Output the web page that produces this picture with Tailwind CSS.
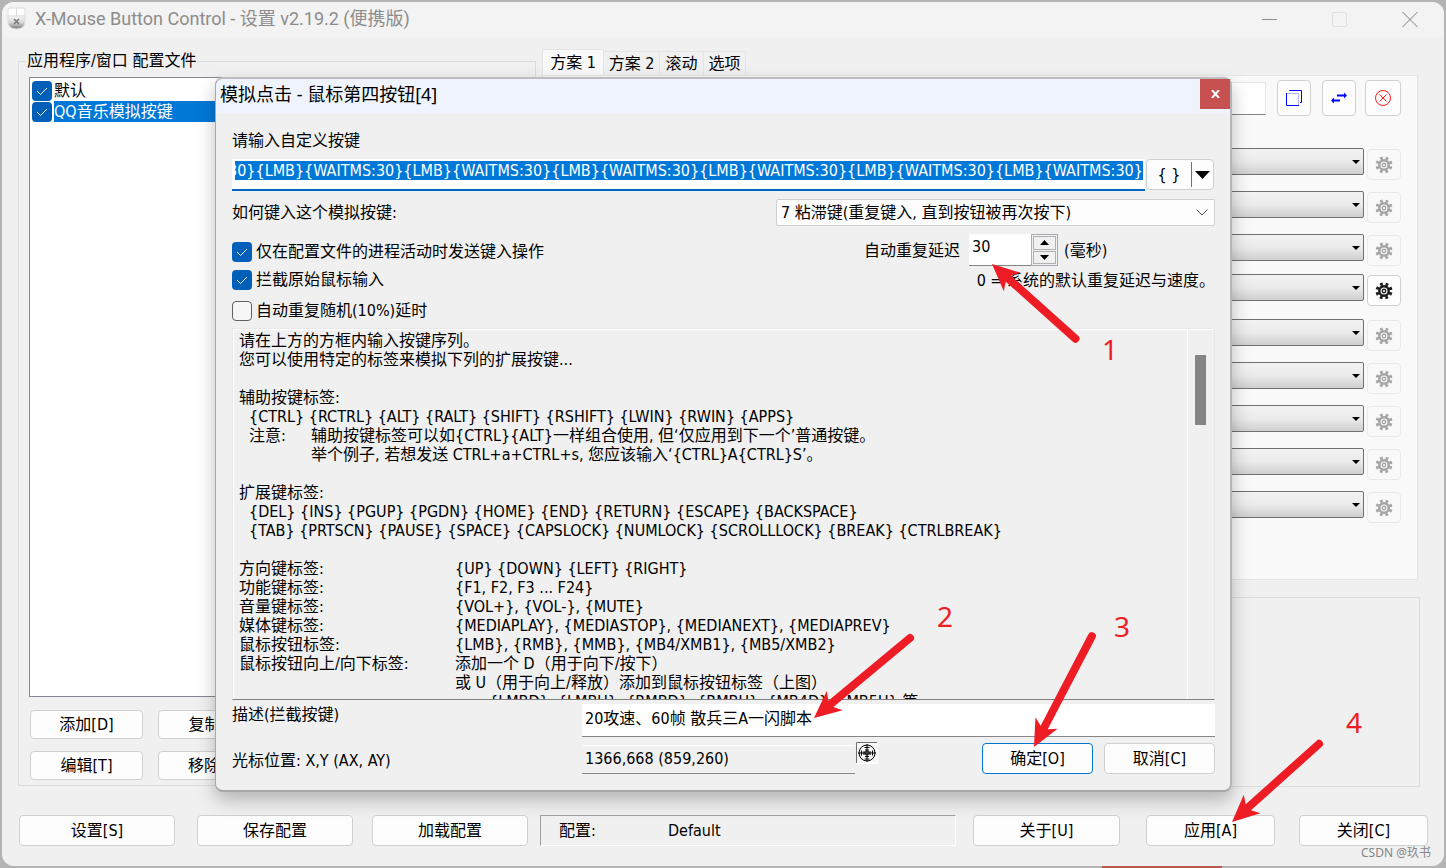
<!DOCTYPE html>
<html lang="zh-CN">
  <head>
    <meta charset="UTF-8" />
    <meta name="viewport" content="width=device-width, initial-scale=1.0" />
    <title>X-Mouse Button Control</title>
    <script src="https://cdn.jsdelivr.net/npm/@tailwindcss/browser@4"></script>
  </head>
  <body
    class="relative min-h-screen flex flex-col overflow-hidden bg-[#b4b4b4] p-[2px] text-black text-[16px] leading-[21px] font-['DejaVu_Sans_Condensed','Noto_Sans_CJK_SC',sans-serif]"
  >
    <!-- Window showing behind at the bottom edge -->
    <div class="absolute bottom-0 right-[224px] w-[120px] h-[2px] bg-[#b85a4c]"></div>

    <!-- Main window -->
    <div class="flex-1 flex flex-col rounded-xl bg-[#f0f0f0]">
      <!-- Title bar -->
      <header class="flex items-center h-[35px] pl-[5px] pr-[26px] pb-[2px] rounded-t-xl bg-[#f3f3f3] text-[#8c8c8c] font-['Roboto','Noto_Sans_CJK_SC',sans-serif]">
        <svg class="w-5 h-6" viewBox="0 0 20 24">
          <defs>
            <linearGradient id="mouse" x1="0" y1="0" x2="0" y2="1">
              <stop offset="0.3" stop-color="#fff" />
              <stop offset="0.7" stop-color="#d5d5d5" />
              <stop offset="1" stop-color="#777" />
            </linearGradient>
          </defs>
          <path d="M1 3q0-2 2-2h13q2 0 2 2v11q0 8-8.500 8T1 14z" fill="url(#mouse)" stroke="#ddd" />
          <path d="M9.500 1v8M1 9h17" stroke="#ddd" />
          <path d="M7 12l5 5M12 12l-5 5" stroke="#777" stroke-width="1.500" />
        </svg>
        <h1 class="ml-2 text-[18px] leading-6">X-Mouse Button Control - 设置 v2.19.2 (便携版)</h1>
        <div class="ml-auto flex gap-[54px]">
          <button aria-label="最小化">
            <svg class="w-4 h-4" viewBox="0 0 16 16" stroke="#8c8c8c"><path d="M0 8.500h15" /></svg>
          </button>
          <button aria-label="最大化">
            <svg class="w-4 h-4" viewBox="0 0 16 16" fill="none" stroke="#e0e0e0"><rect x=".5" y="1.500" width="14" height="14" rx="1" /></svg>
          </button>
          <button aria-label="关闭窗口">
            <svg class="w-4 h-4" viewBox="0 0 16 16" stroke="#7c7c7c"><path d="M.5 1l15 15M15.500 1l-15 15" /></svg>
          </button>
        </div>
      </header>

      <div class="flex gap-[6px] pl-4 pr-6 pt-3">
        <!-- Profiles -->
        <fieldset class="w-[518px] h-[737px] border border-[#dcdcdc] pl-[10px] pr-[5px] pb-[5px] flex flex-col">
          <legend class="-ml-[3px] px-[1px] leading-6">应用程序/窗口 配置文件</legend>
          <div class="flex-1 mt-1 border border-[#828790] bg-white p-[2px]">
            <div class="h-[21px]">
              <label class="relative flex items-center w-full">
                <input type="checkbox" checked class="appearance-none w-5 h-5 rounded bg-[#005fb8]" />
                <svg class="absolute left-[5px] w-[10px] h-[10px]" viewBox="0 0 10 10" fill="none" stroke="#fff"><path d="M0 5l3.500 3.500L10 2" /></svg>
                <span class="ml-[2px]">默认</span>
              </label>
            </div>
            <div class="h-[21px]">
              <label class="relative flex items-center w-full">
                <input type="checkbox" checked class="appearance-none w-5 h-5 rounded bg-[#005fb8]" />
                <svg class="absolute left-[5px] w-[10px] h-[10px]" viewBox="0 0 10 10" fill="none" stroke="#fff"><path d="M0 5l3.500 3.500L10 2" /></svg>
                <span class="ml-[2px] flex-1 bg-[#0078d7] text-white">QQ音乐模拟按键</span>
              </label>
            </div>
          </div>
          <div class="mt-[13px] pl-[1px] grid grid-cols-[113px_113px] gap-x-[15px] gap-y-3">
            <button class="h-[29px] rounded border border-[#d0d0d0] bg-[#fdfdfd]">添加[D]</button>
            <button class="h-[29px] rounded border border-[#d0d0d0] bg-[#fdfdfd]">复制[Y]</button>
            <button class="h-[29px] rounded border border-[#d0d0d0] bg-[#fdfdfd]">编辑[T]</button>
            <button class="h-[29px] rounded border border-[#d0d0d0] bg-[#fdfdfd]">移除[R]</button>
          </div>
        </fieldset>

        <!-- Layers -->
        <div class="flex-1 flex flex-col">
          <nav class="flex items-end h-[26px]">
            <button class="w-[62px] h-[26px] border border-b-0 border-[#e5e5e5] bg-[#f9f9f9]">方案 1</button>
            <button class="w-14 h-6 border border-l-0 border-b-0 border-[#e5e5e5]">方案 2</button>
            <button class="w-11 h-6 border border-l-0 border-b-0 border-[#e5e5e5]">滚动</button>
            <button class="w-[42px] h-6 border border-l-0 border-b-0 border-[#e5e5e5]">选项</button>
          </nav>
          <section class="h-[505px] mr-[2px] border border-[#e5e5e5] bg-[#f9f9f9] pt-1 pr-4">
            <div class="flex items-center justify-end">
              <input type="text" aria-label="方案名称" class="flex-1 h-[33px] border border-[#e5e5e5] border-b-[#868686] bg-white" />
              <button aria-label="复制方案" class="ml-[11px] grid place-items-center w-[34px] h-9 rounded border border-[#d0d0d0] bg-[#fdfdfd]">
                <svg class="w-4 h-4" viewBox="0 0 16 16" fill="none" stroke="#0000ff">
                  <path d="M3.500 1V.5h12v12H14" />
                  <path d="M.5 3.500h12v12" stroke="#b4b4ff" />
                  <path d="M.5 3v12.500H13" />
                </svg>
              </button>
              <button aria-label="交换方案" class="ml-[11px] grid place-items-center w-[34px] h-9 rounded border border-[#d0d0d0] bg-[#fdfdfd]">
                <svg class="w-4 h-4" viewBox="0 0 16 16" fill="#0000ff"><path d="M6 4.500h7V2.500l3 3-3 3v-2H6zM9 9.500H3v-2l-3 3 3 3v-2h6z" /></svg>
              </button>
              <button aria-label="清除方案" class="ml-[9px] grid place-items-center w-9 h-9 rounded border border-[#d0d0d0] bg-[#fdfdfd]">
                <svg class="w-4 h-4" viewBox="0 0 16 16" fill="none" stroke="#ff1a1a"><circle cx="8" cy="8" r="7.500" /><path d="M4.500 4.500l7 7M11.500 4.500l-7 7" /></svg>
              </button>
            </div>
            <div id="buttonRows" class="mt-8"></div>
          </section>
          <div class="mt-[17px] h-[190px] border border-[#dcdcdc]"></div>
        </div>
      </div>

      <!-- Bottom bar -->
      <footer class="mt-7 flex items-start pl-[17px] pr-4">
        <button class="w-[156px] h-[31px] rounded border border-[#d0d0d0] bg-[#fdfdfd]">设置[S]</button>
        <button class="ml-[22px] w-[156px] h-[31px] rounded border border-[#d0d0d0] bg-[#fdfdfd]">保存配置</button>
        <button class="ml-[19px] w-[156px] h-[31px] rounded border border-[#d0d0d0] bg-[#fdfdfd]">加载配置</button>
        <div class="ml-3 flex-1 flex items-center h-[31px] border border-white border-t-[#a0a0a0] border-l-[#a0a0a0] pl-[18px]">
          <span class="w-[109px]">配置:</span><span>Default</span>
        </div>
        <button class="ml-[17px] w-[147px] h-[31px] rounded border border-[#d0d0d0] bg-[#fdfdfd]">关于[U]</button>
        <button class="ml-[26px] w-[129px] h-[31px] rounded border border-[#d0d0d0] bg-[#fdfdfd]">应用[A]</button>
        <button class="ml-6 w-[129px] h-[31px] rounded border border-[#d0d0d0] bg-[#fdfdfd]">关闭[C]</button>
      </footer>
      <p class="pr-[13px] text-right text-[12px] leading-[14px] text-[#858585] font-['Noto_Sans','Noto_Sans_CJK_SC',sans-serif]">CSDN @玖书</p>
    </div>

    <!-- Simulated keys dialog -->
    <div
      role="dialog"
      aria-labelledby="dialogTitle"
      class="absolute left-[215px] top-[77px] w-[1017px] h-[715px] flex flex-col rounded-lg border border-[#a8a8a8] border-t-2 border-r-2 border-b-2 border-t-[#bdbdbd] border-r-[#b5b5b5] bg-[#f0f0f0] shadow-[0_8px_18px_rgba(0,0,0,0.25)]"
    >
      <div class="flex items-start justify-between h-[34px] rounded-t-lg bg-[#eff3fb]">
        <h2 id="dialogTitle" class="pl-1 text-[18px] leading-[30px] font-['Noto_Sans','Noto_Sans_CJK_SC',sans-serif]">模拟点击 - 鼠标第四按钮[4]</h2>
        <button aria-label="关闭对话框" class="grid place-items-center w-[30px] h-[30px] bg-[#c75050]">
          <svg class="w-[9px] h-[8px]" viewBox="0 0 9 8" stroke="#fff" stroke-width="2"><path d="M1 0l7 8M8 0L1 8" /></svg>
        </button>
      </div>

      <div class="flex-1 flex flex-col pl-4 pr-[15px] pt-[17px]">
        <label for="keys">请输入自定义按键</label>
        <div class="mt-2 mr-[1px] flex">
          <div class="flex-1 h-8 border-b-2 border-[#0067c0] bg-white pl-[3px] pr-[2px] pt-[2px]">
            <input
              id="keys"
              type="text"
              class="block w-full h-[19px] bg-[#0078d7] text-white outline-none"
              value="30}{LMB}{WAITMS:30}{LMB}{WAITMS:30}{LMB}{WAITMS:30}{LMB}{WAITMS:30}{LMB}{WAITMS:30}{LMB}{WAITMS:30}"
            />
          </div>
          <button aria-label="插入标签" class="ml-[1px] flex items-center w-[68px] h-[31px] rounded border border-[#d0d0d0] bg-[#fdfdfd]">
            <span class="w-11">{ }</span>
            <span class="w-[1px] h-[25px] bg-[#707070]"></span>
            <svg class="ml-[3px] w-[15px] h-2" viewBox="0 0 15 8"><path d="M0 0h15L7.500 8z" /></svg>
          </button>
        </div>

        <div class="mt-2 flex items-center justify-between">
          <label for="mode">如何键入这个模拟按键:</label>
          <div class="relative w-[439px]">
            <select id="mode" class="block appearance-none w-full h-[27px] rounded-[2px] border border-[#d0d0d0] bg-[#fdfdfd] pl-1">
              <option>7 粘滞键(重复键入, 直到按钮被再次按下)</option>
            </select>
            <svg class="absolute right-[7px] top-[9px] w-3 h-2" viewBox="0 0 12 8" fill="none" stroke="#505050"><path d="M.5 1.500L6 7l5.500-5.500" /></svg>
          </div>
        </div>

        <div class="mt-2 flex justify-between">
          <div class="pt-[7px]">
            <label class="relative flex items-center">
              <input type="checkbox" checked class="appearance-none w-5 h-5 rounded bg-[#005fb8]" />
              <svg class="absolute left-[5px] w-[10px] h-[10px]" viewBox="0 0 10 10" fill="none" stroke="#fff"><path d="M0 5l3.500 3.500L10 2" /></svg>
              <span class="ml-1">仅在配置文件的进程活动时发送键入操作</span>
            </label>
            <label class="relative mt-[7px] flex items-center">
              <input type="checkbox" checked class="appearance-none w-5 h-5 rounded bg-[#005fb8]" />
              <svg class="absolute left-[5px] w-[10px] h-[10px]" viewBox="0 0 10 10" fill="none" stroke="#fff"><path d="M0 5l3.500 3.500L10 2" /></svg>
              <span class="ml-1">拦截原始鼠标输入</span>
            </label>
            <label class="mt-[10px] flex items-center">
              <input type="checkbox" class="appearance-none w-5 h-5 rounded border border-[#616161] bg-[#f6f6f6]" />
              <span class="ml-1">自动重复随机(10%)延时</span>
            </label>
          </div>
          <div class="w-[351px]">
            <div class="flex items-center">
              <label for="delay">自动重复延迟</label>
              <input id="delay" type="text" value="30" class="ml-[9px] w-[62px] h-8 border-b border-[#868686] bg-white pl-[3px] pb-[6px]" />
              <div class="flex flex-col gap-[1px] w-[27px] h-8 border border-[#a9abb3] p-[1px]">
                <button aria-label="增加" class="flex-1 grid place-items-center border border-[#b0b0b0] bg-[#f0f0f0]">
                  <svg class="w-[9px] h-[5px]" viewBox="0 0 9 5"><path d="M0 5h9L4.500 0z" /></svg>
                </button>
                <button aria-label="减少" class="flex-1 grid place-items-center border border-[#b0b0b0] bg-[#f0f0f0]">
                  <svg class="w-[9px] h-[5px]" viewBox="0 0 9 5"><path d="M0 0h9L4.500 5z" /></svg>
                </button>
              </div>
              <span class="ml-[6px]">(毫秒)</span>
            </div>
            <p class="mt-1 text-right">0 = 系统的默认重复延迟与速度。</p>
          </div>
        </div>

        <!-- Help text -->
        <div class="mt-[7px] flex h-[372px] border border-[#e8e8e8] border-b-[#808080] overflow-hidden shadow-[inset_1px_1px_0_#fff]">
          <div class="flex-1 overflow-hidden pl-[6px] pt-[2px] leading-[19px] whitespace-nowrap">
            <p>请在上方的方框内输入按键序列。</p>
            <p>您可以使用特定的标签来模拟下列的扩展按键...</p>
            <p class="mt-[19px]">辅助按键标签:</p>
            <p class="pl-[10px]">{CTRL} {RCTRL} {ALT} {RALT} {SHIFT} {RSHIFT} {LWIN} {RWIN} {APPS}</p>
            <div class="grid grid-cols-[62px_1fr] pl-[10px]">
              <span>注意:</span>
              <span>辅助按键标签可以如{CTRL}{ALT}一样组合使用, 但‘仅应用到下一个’普通按键。</span>
              <span class="col-start-2">举个例子, 若想发送 CTRL+a+CTRL+s, 您应该输入‘{CTRL}A{CTRL}S’。</span>
            </div>
            <p class="mt-[19px]">扩展键标签:</p>
            <p class="pl-[10px]">{DEL} {INS} {PGUP} {PGDN} {HOME} {END} {RETURN} {ESCAPE} {BACKSPACE}</p>
            <p class="pl-[10px]">{TAB} {PRTSCN} {PAUSE} {SPACE} {CAPSLOCK} {NUMLOCK} {SCROLLLOCK} {BREAK} {CTRLBREAK}</p>
            <div class="mt-[19px] grid grid-cols-[216px_1fr]">
              <span>方向键标签:</span>
              <span>{UP} {DOWN} {LEFT} {RIGHT}</span>
              <span>功能键标签:</span>
              <span>{F1, F2, F3 ... F24}</span>
              <span>音量键标签:</span>
              <span>{VOL+}, {VOL-}, {MUTE}</span>
              <span>媒体键标签:</span>
              <span>{MEDIAPLAY}, {MEDIASTOP}, {MEDIANEXT}, {MEDIAPREV}</span>
              <span>鼠标按钮标签:</span>
              <span>{LMB}, {RMB}, {MMB}, {MB4/XMB1}, {MB5/XMB2}</span>
              <span>鼠标按钮向上/向下标签:</span>
              <span>添加一个 D（用于向下/按下）</span>
              <span class="col-start-2">或 U（用于向上/释放）添加到鼠标按钮标签（上图）</span>
              <span class="col-start-2 pl-[34px]">{LMBD}, {LMBU}, {RMBD}, {RMBU}, {MB4D}, {MB5U} 等</span>
            </div>
          </div>
          <div class="w-[27px] border-l border-white pt-[26px] pl-[7px]">
            <div class="w-[11px] h-[70px] bg-[#858585]"></div>
          </div>
        </div>

        <div class="mt-1 grid grid-cols-[350px_1fr] items-start">
          <label for="desc">描述(拦截按键)</label>
          <input id="desc" type="text" value="20攻速、60帧 散兵三A一闪脚本" class="h-[33px] border-b border-[#868686] bg-white pl-[3px] pb-[7px]" />
        </div>
        <div class="mt-[5px] flex items-start">
          <label for="cursorPos" class="w-[350px] pt-2">光标位置: X,Y (AX, AY)</label>
          <input id="cursorPos" type="text" readonly value="1366,668 (859,260)" class="mt-[3px] w-[273px] h-[29px] border-b border-[#868686] shadow-[inset_0_1px_0_#fff] pl-[3px] pb-[2px]" />
          <svg class="ml-[1px] w-[22px] h-[22px]" viewBox="0 0 22 22" fill="none" stroke="#000">
            <path d="M0 0h22v22H0z" fill="#f8f8f8" stroke="none" />
            <path d="M.5 21V.5H21" stroke="#707070" />
            <path d="M21.500 1v20.500H1" stroke="#fff" />
            <circle cx="11" cy="11" r="8" />
            <circle cx="11" cy="11" r="2" />
            <path d="M11 2v18M2 11h18M8.500 5.500h5M9 8h4M9 14.500h4M8.500 17h5M5.500 8.500v5M8 9v4M14 9v4M16.500 8.500v5" />
          </svg>
          <div class="ml-auto flex gap-[11px]">
            <button class="mt-[1px] w-[111px] h-[31px] rounded border border-[#0078d4] bg-[#fdfdfd]">确定[O]</button>
            <button class="mt-[1px] w-[111px] h-[31px] rounded border border-[#d0d0d0] bg-[#fdfdfd]">取消[C]</button>
          </div>
        </div>
      </div>
    </div>

    <!-- Step arrows -->
    <svg
      class="absolute left-0 top-0 w-[1446px] h-[868px] pointer-events-none text-[28px] font-['Noto_Sans',sans-serif]"
      viewBox="0 0 1446 868"
      fill="#ee1c25"
      stroke="none"
    >
      <g transform="translate(992 264) rotate(41.800)">
        <path d="M0 0L27-12.500L22-4H112a4 4 0 0 1 0 8H22L27 12.500z" />
      </g>
      <g transform="translate(814 718) rotate(-39.800)">
        <path d="M0 0L27-12.500L22-4H125a4 4 0 0 1 0 8H22L27 12.500z" />
      </g>
      <g transform="translate(1034 747) rotate(-62.400)">
        <path d="M0 0L27-12.500L22-4H125a4 4 0 0 1 0 8H22L27 12.500z" />
      </g>
      <g transform="translate(1232 822) rotate(-41.900)">
        <path d="M0 0L27-12.500L22-4H117a4 4 0 0 1 0 8H22L27 12.500z" />
      </g>
      <text x="1102" y="360">1</text>
      <text x="937" y="627">2</text>
      <text x="1114" y="637">3</text>
      <text x="1346" y="733">4</text>
    </svg>

    <script>
      const gear =
        '<svg class="w-[18px] h-[18px]" viewBox="0 0 18 18" fill="none" stroke="currentColor"><circle cx="9" cy="9" r="7" stroke-width="3" stroke-dasharray="2.75 2.75" transform="rotate(11 9 9)"/><circle cx="9" cy="9" r="4.750" stroke-width="2.500"/><circle cx="9" cy="9" r="1.750" stroke-width="1.300"/></svg>';
      const rows = ["左键", "右键", "中键", "第四按钮", "第五按钮", "滚轮向上", "滚轮向下", "滚轮向左", "滚轮向右"];

      document.getElementById("buttonRows").innerHTML = rows
        .map((name, i) => {
          const active = i === 3;
          const gap = i === 2 ? "mb-2" : active ? "mb-[13px]" : "mb-[11px]";
          const gearClass = active ? "border-[#d0d0d0] bg-[#fdfdfd] text-[#1a1a1a]" : "border-[#eaeaea] text-[#a5a5a5]";
          return `
          <div class="flex items-start ${gap}">
            <div class="relative flex-1">
              <select aria-label="${name}" class="block appearance-none w-full h-[27px] rounded-[2px] border border-[#707070] bg-linear-to-b from-[#f2f2f2] from-0% via-[#ebebeb] via-50% to-[#cfcfcf]"></select>
              <svg class="absolute right-1 top-3 w-2 h-1" viewBox="0 0 8 4"><path d="M0 0h8L4 4z" /></svg>
            </div>
            <button aria-label="${name}设置" ${active ? "" : "disabled"} class="ml-[3px] mt-[1px] grid place-items-center w-[34px] h-[31px] rounded border ${gearClass}">${gear}</button>
          </div>`;
        })
        .join("");

      // Keep the end of the key sequence in view
      const keys = document.getElementById("keys");
      keys.scrollLeft = keys.scrollWidth;
    </script>
  </body>
</html>
